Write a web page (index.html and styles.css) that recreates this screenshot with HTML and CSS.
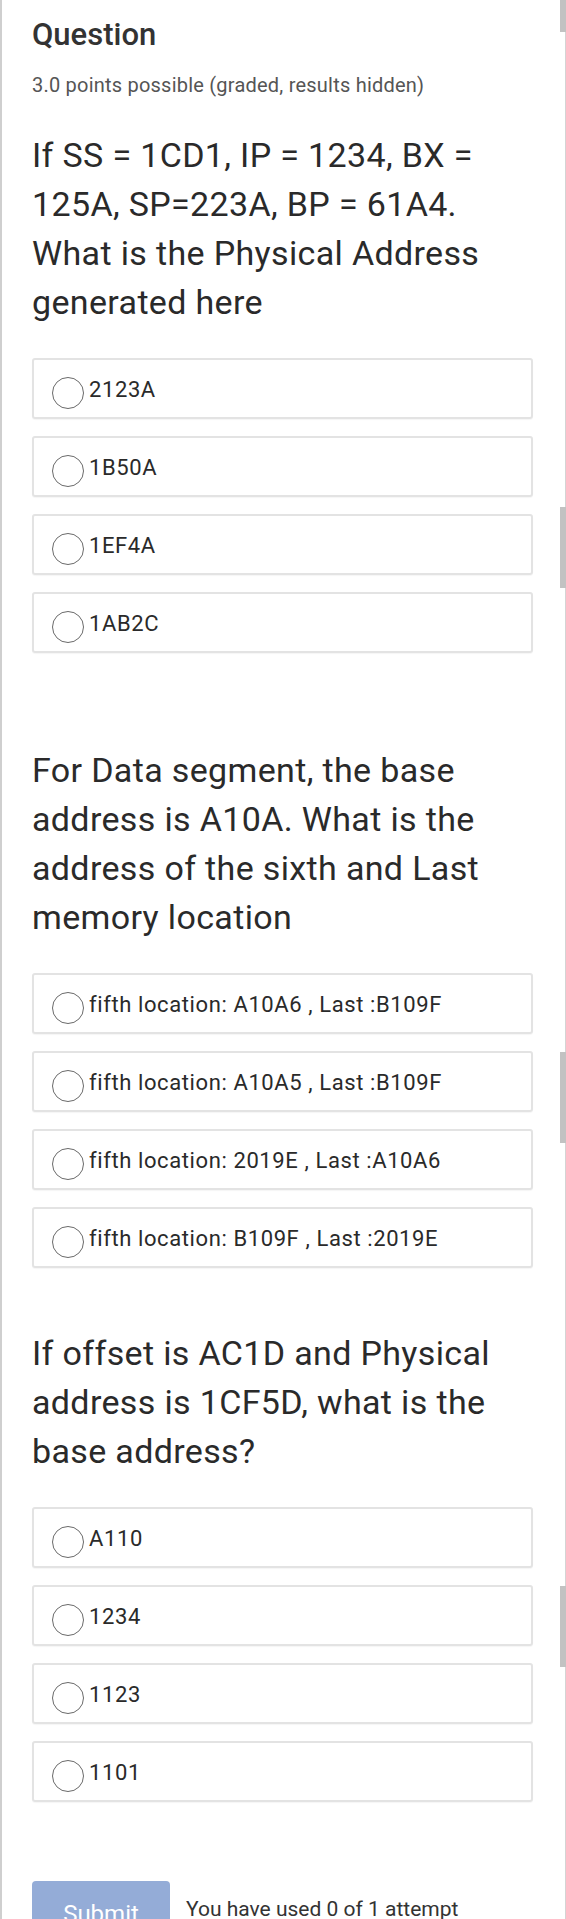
FILE: index.html
```html
<!DOCTYPE html>
<html lang="en">
<head>
<meta charset="utf-8">
<title>Question</title>
<link rel="stylesheet" href="styles.css">
</head>
<body>
<div class="page">
  <h2 class="title">Question</h2>
  <div class="points">3.0 points possible (graded, results hidden)</div>

  <div class="problem q1">
    <p class="prompt">If SS = 1CD1, IP = 1234, BX = 125A, SP=223A, BP = 61A4. What is the Physical Address generated here</p>
    <div class="choices">
      <label class="choice"><span class="radio"></span><span class="text">2123A</span></label>
      <label class="choice"><span class="radio"></span><span class="text">1B50A</span></label>
      <label class="choice"><span class="radio"></span><span class="text">1EF4A</span></label>
      <label class="choice"><span class="radio"></span><span class="text">1AB2C</span></label>
    </div>
  </div>

  <div class="problem q2">
    <p class="prompt">For Data segment, the base address is A10A. What is the address of the sixth and Last memory location</p>
    <div class="choices">
      <label class="choice"><span class="radio"></span><span class="text">fifth location: A10A6 , Last :B109F</span></label>
      <label class="choice"><span class="radio"></span><span class="text">fifth location: A10A5 , Last :B109F</span></label>
      <label class="choice"><span class="radio"></span><span class="text">fifth location: 2019E , Last :A10A6</span></label>
      <label class="choice"><span class="radio"></span><span class="text">fifth location: B109F , Last :2019E</span></label>
    </div>
  </div>

  <div class="problem q3">
    <p class="prompt">If offset is AC1D and Physical address is 1CF5D, what is the base address?</p>
    <div class="choices">
      <label class="choice"><span class="radio"></span><span class="text">A110</span></label>
      <label class="choice"><span class="radio"></span><span class="text">1234</span></label>
      <label class="choice"><span class="radio"></span><span class="text">1123</span></label>
      <label class="choice"><span class="radio"></span><span class="text">1101</span></label>
    </div>
  </div>

  <div class="actions">
    <button class="submit" type="button">Submit</button>
    <span class="attempts">You have used 0 of 1 attempt</span>
  </div>
</div>
<div class="thumb t1"></div>
<div class="thumb t2"></div>
<div class="thumb t3"></div>
<div class="thumb t4"></div>
</body>
</html>
```

FILE: styles.css
```css
html, body {
  margin: 0;
  padding: 0;
  background: #ffffff;
}

body {
  font-family: Roboto, "Liberation Sans", Arial, sans-serif;
  color: #2b2b2b;
  position: relative;
}

.page {
  box-sizing: border-box;
  width: 566px;
  min-height: 1980px;
  border-left: 2px solid #cfcfcf;
  border-right: 1px solid #d4d4d4;
  padding: 16px 32px 60px 30px;
}

.title {
  margin: 0;
  font-size: 31px;
  line-height: 37px;
  font-weight: 500;
  color: #333333;
}

.points {
  margin-top: 18px;
  font-size: 20px;
  line-height: 28px;
  letter-spacing: 0.22px;
  color: #555555;
}

.problem .prompt {
  margin: 0;
  font-size: 34px;
  line-height: 49px;
  letter-spacing: 0.35px;
  color: #2a2a2a;
}

.q1 { margin-top: 32px; }
.q2 { margin-top: 93px; }
.q3 { margin-top: 61px; }

.choices {
  margin-top: 31px;
  display: flex;
  flex-direction: column;
  gap: 17px;
}

.choice {
  box-sizing: border-box;
  height: 61px;
  display: flex;
  align-items: flex-start;
  border: 2px solid #e3e3e3;
  border-radius: 3px;
  padding: 17px 18px 8px 18px;
  box-shadow: 0 1px 1px rgba(0, 0, 0, 0.04);
}

.radio {
  flex: none;
  box-sizing: border-box;
  width: 32px;
  height: 32px;
  border: 1.6px solid #6a6a6a;
  border-radius: 50%;
}

.text {
  margin-left: 5px;
  font-size: 22px;
  line-height: 26px;
  letter-spacing: 0.6px;
  color: #2a2a2a;
  white-space: nowrap;
}

.actions {
  margin-top: 79px;
  display: flex;
  align-items: flex-start;
  gap: 16px;
}

.submit {
  width: 138px;
  height: 52px;
  border: none;
  border-radius: 4px;
  background: #94acd7;
  color: #ffffff;
  font-family: Roboto, "Liberation Sans", Arial, sans-serif;
  font-size: 24px;
  padding: 14px 0 0 0;
  text-align: center;
  line-height: 28px;
}

.attempts {
  margin-top: 14px;
  font-size: 21px;
  line-height: 28px;
  color: #333333;
}

.thumb {
  position: absolute;
  left: 560px;
  width: 6px;
  background: #c2c2c2;
}
.t1 { top: 0; height: 32px; }
.t2 { top: 507px; height: 81px; }
.t3 { top: 1052px; height: 91px; }
.t4 { top: 1586px; height: 81px; }
```
